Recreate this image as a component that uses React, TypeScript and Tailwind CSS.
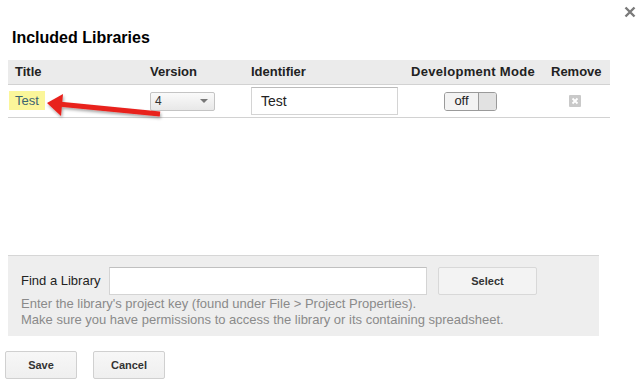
import React from "react";

function CloseX() {
  return (
    <svg width="12" height="12" viewBox="0 0 12 12">
      <path d="M1.5 1.5 L10.5 10.5 M10.5 1.5 L1.5 10.5" stroke="#7a7a7a" strokeWidth="2.4" />
    </svg>
  );
}

function RemoveIcon() {
  return (
    <svg width="12" height="12" viewBox="0 0 12 12">
      <rect x="0" y="0" width="12" height="12" rx="1" fill="#c9c9c9" />
      <path d="M3.5 3.5 L8.5 8.5 M8.5 3.5 L3.5 8.5" stroke="#ffffff" strokeWidth="1.8" />
    </svg>
  );
}

function Arrow() {
  return (
    <svg className="absolute left-0 top-0 pointer-events-none" width="200" height="140" viewBox="0 0 200 140">
      <defs>
        <filter id="sh" x="-20%" y="-50%" width="140%" height="200%">
          <feDropShadow dx="1" dy="2" stdDeviation="1.5" floodColor="#000" floodOpacity="0.35" />
        </filter>
      </defs>
      <g filter="url(#sh)">
        <path d="M58 104 L160 114" stroke="#e8201c" strokeWidth="5" strokeLinecap="butt" />
        <path d="M47 103 L63 94 L61 116 Z" fill="#e8201c" />
      </g>
    </svg>
  );
}

export default function App() {
  return (
    <div className="relative w-[642px] h-[384px] bg-white overflow-hidden font-['Liberation_Sans',Arial,sans-serif] text-[#222]">
      <button className="absolute right-[6px] top-[6px]">
        <CloseX />
      </button>

      <div className="pt-[28px] pl-[12px] text-[16px] leading-[20px] font-bold text-black">Included Libraries</div>

      <div className="mt-[12px] ml-[8px] w-[602px]">
        <div className="grid grid-cols-[135px_101px_160px_140px_1fr] pl-[7px] h-[25px] items-center bg-[#ebebeb] border-b border-[#d2d2d2] text-[13px] font-bold text-[#222]">
          <div>Title</div>
          <div>Version</div>
          <div>Identifier</div>
          <div className="tracking-[0.3px]">Development Mode</div>
          <div>Remove</div>
        </div>
        <div className="grid grid-cols-[135px_101px_160px_140px_1fr] pl-[7px] h-[33px] items-center border-b border-[#d2d2d2] text-[13px]">
          <div>
            <span className="ml-[-6px] px-[6px] py-[2px] bg-[#fbf69a] text-[#3d6472]">Test</span>
          </div>
          <div>
            <div className="flex items-center justify-between w-[65px] h-[19px] border border-[#c4c4c4] rounded-[2px] bg-gradient-to-b from-[#fafafa] to-[#e8e8e8] pl-[4px] pr-[6px] text-[12px] text-[#333]">
              <span>4</span>
              <span className="w-0 h-0 border-l-[4px] border-r-[4px] border-t-[4px] border-l-transparent border-r-transparent border-t-[#777]" />
            </div>
          </div>
          <div>
            <div className="w-[147px] h-[28px] border border-[#d4d4d4] border-t-[#bbb] flex items-center pl-[9px] text-[14px] text-[#222]">Test</div>
          </div>
          <div>
            <div className="ml-[33px] flex w-[53px] h-[19px] border border-[#9a9a9a] rounded-[3px] overflow-hidden text-[13px]">
              <div className="w-[33px] bg-[#f3f3f3] flex items-center justify-center text-[#222]">off</div>
              <div className="flex-1 border-l border-[#9a9a9a] bg-[#e2e2e2]" />
            </div>
          </div>
          <div className="pl-[18px] flex items-center">
            <RemoveIcon />
          </div>
        </div>
      </div>

      <div className="mt-[137px] ml-[8px] w-[591px] h-[81px] bg-[#eeeeee] border-t border-[#d6d6d6] pl-[13px] pt-[11px]">
        <div className="flex items-center">
          <div className="w-[88px] text-[13px] text-[#222]">Find a Library</div>
          <div className="w-[318px] h-[28px] bg-white border border-[#d4d4d4] border-t-[#c0c0c0]" />
          <button className="ml-[11px] w-[99px] h-[28px] bg-[#f3f3f3] border border-[#d8d8d8] rounded-[2px] text-[11px] font-bold text-[#333]">Select</button>
        </div>
        <div className="mt-[1px] text-[13px] leading-[16px] text-[#8a8a8a]">
          <div>Enter the library's project key (found under File &gt; Project Properties).</div>
          <div>Make sure you have permissions to access the library or its containing spreadsheet.</div>
        </div>
      </div>

      <div className="mt-[15px] ml-[5px] flex gap-[16px]">
        <button className="w-[72px] h-[28px] bg-gradient-to-b from-[#f7f7f7] to-[#efefef] border border-[#d0d0d0] rounded-[2px] text-[11px] font-bold text-[#333]">Save</button>
        <button className="w-[72px] h-[28px] bg-gradient-to-b from-[#f7f7f7] to-[#efefef] border border-[#d0d0d0] rounded-[2px] text-[11px] font-bold text-[#333]">Cancel</button>
      </div>

      <Arrow />
    </div>
  );
}
